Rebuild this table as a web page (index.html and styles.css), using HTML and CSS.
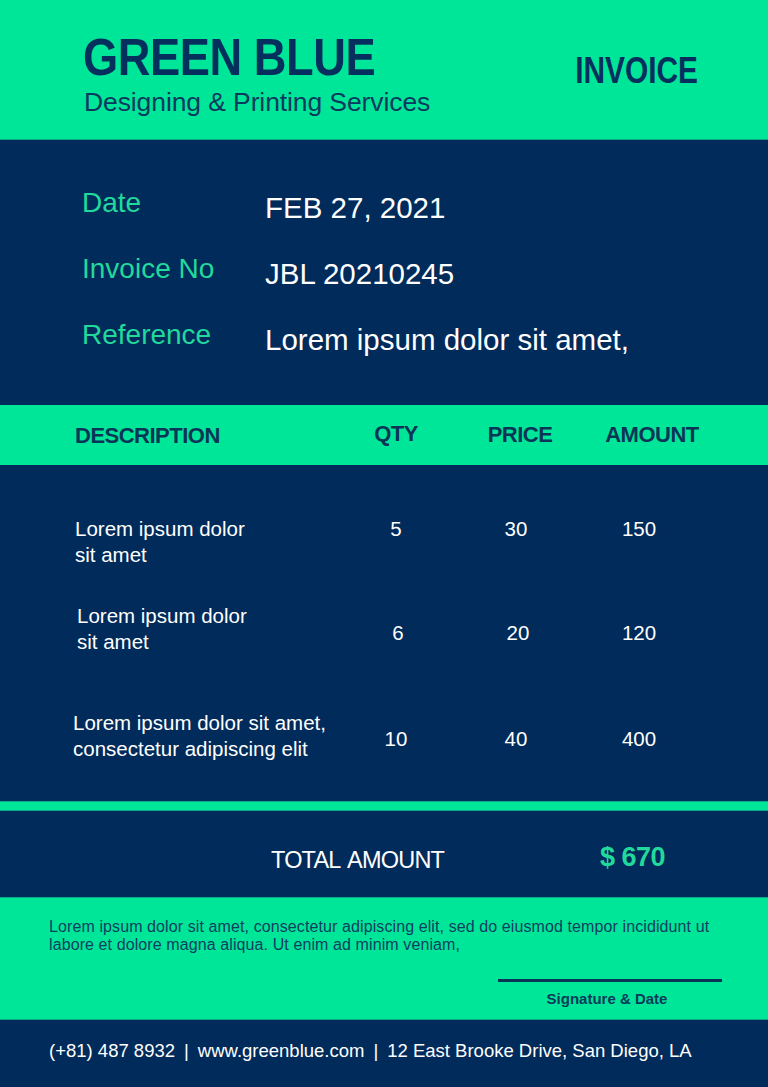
FILE: index.html
```html
<!DOCTYPE html>
<html lang="en">
<head>
<meta charset="utf-8">
<title>Invoice - Green Blue</title>
<link rel="stylesheet" href="styles.css">
</head>
<body>
<div class="page">
  <header class="top">
    <div class="brand">
      <h1 class="brand-name">GREEN BLUE</h1>
      <p class="brand-tag">Designing &amp; Printing Services</p>
    </div>
    <div class="doc-title">INVOICE</div>
  </header>

  <section class="info">
    <div class="info-row">
      <span class="info-label">Date</span>
      <span class="info-value">FEB 27, 2021</span>
    </div>
    <div class="info-row">
      <span class="info-label">Invoice No</span>
      <span class="info-value">JBL 20210245</span>
    </div>
    <div class="info-row">
      <span class="info-label">Reference</span>
      <span class="info-value">Lorem ipsum dolor sit amet,</span>
    </div>
  </section>

  <div class="thead">
    <span class="th th-desc">DESCRIPTION</span>
    <span class="th th-qty">QTY</span>
    <span class="th th-price">PRICE</span>
    <span class="th th-amt">AMOUNT</span>
  </div>

  <section class="tbody">
    <div class="trow trow-first">
      <span class="td-desc">Lorem ipsum dolor<br>sit amet</span>
      <span class="td">5</span>
      <span class="td">30</span>
      <span class="td td-amt">150</span>
    </div>
    <div class="trow trow-second">
      <span class="td-desc">Lorem ipsum dolor<br>sit amet</span>
      <span class="td">6</span>
      <span class="td">20</span>
      <span class="td td-amt">120</span>
    </div>
    <div class="trow trow-third">
      <span class="td-desc td-desc-wide">Lorem ipsum dolor sit amet,<br>consectetur adipiscing elit</span>
      <span class="td">10</span>
      <span class="td">40</span>
      <span class="td td-amt">400</span>
    </div>
  </section>

  <div class="strip"></div>

  <section class="total">
    <span class="total-label">TOTAL AMOUNT</span>
    <span class="total-value">$ 670</span>
  </section>

  <section class="note">
    <p class="note-text">Lorem ipsum dolor sit amet, consectetur adipiscing elit, sed do eiusmod tempor incididunt ut<br>labore et dolore magna aliqua. Ut enim ad minim veniam,</p>
    <div class="signature">
      <div class="sig-line"></div>
      <div class="sig-label">Signature &amp; Date</div>
    </div>
  </section>

  <footer class="footer">
    <span>(+81) 487 8932</span><span class="sep">|</span><span>www.greenblue.com</span><span class="sep">|</span><span>12 East Brooke Drive, San Diego, LA</span>
  </footer>
</div>
</body>
</html>
```

FILE: styles.css
```css
* { box-sizing: border-box; }

html, body {
  margin: 0;
  padding: 0;
}

body {
  width: 768px;
  height: 1087px;
  overflow: hidden;
  background: #012b5a;
  font-family: "Liberation Sans", Arial, sans-serif;
}

.page {
  display: flex;
  flex-direction: column;
  width: 768px;
  height: 1087px;
}

/* ---------- header ---------- */
.top {
  height: 140px;
  background: #00e699;
  display: flex;
  justify-content: space-between;
  align-items: flex-start;
  padding: 31px 70px 0 83px;
  border-bottom: 1px solid #0aa887;
}

.brand {
  display: flex;
  flex-direction: column;
  align-items: flex-start;
}

.brand-name {
  margin: 0;
  display: inline-block;
  font-weight: 700;
  font-size: 52px;
  line-height: 1;
  letter-spacing: -0.5px;
  color: #05305e;
  transform: scaleX(0.87);
  transform-origin: left center;
}

.brand-tag {
  margin: 6px 0 0 1px;
  font-size: 26.5px;
  line-height: 1;
  letter-spacing: -0.1px;
  color: #0a3a5e;
}

.doc-title {
  margin-top: 22px;
  font-weight: 700;
  font-size: 36px;
  line-height: 1;
  color: #05305e;
  transform: scaleX(0.83);
  transform-origin: right center;
}

/* ---------- info ---------- */
.info {
  height: 265px;
  padding: 49px 0 0 82px;
  display: flex;
  flex-direction: column;
}

.info-row {
  height: 66px;
  display: flex;
  align-items: flex-start;
}

.info-label {
  width: 183px;
  font-size: 28px;
  line-height: 1;
  color: #22d99c;
}

.info-value {
  margin-top: 4px;
  font-size: 29.5px;
  line-height: 1;
  color: #ffffff;
}

/* ---------- table ---------- */
.thead {
  height: 60px;
  background: #00e699;
  display: grid;
  grid-template-columns: 251px 100px 100px 120px;
  column-gap: 20px;
  align-items: center;
  padding-left: 75px;
}

.th {
  font-weight: 700;
  font-size: 22px;
  line-height: 1;
  letter-spacing: -0.5px;
  color: #0a3556;
  text-align: center;
}

.th-desc { text-align: left; margin-top: 2px; }
.th-qty { margin-top: -2px; }
.th-price { padding-left: 8px; }
.th-amt { padding-left: 12px; }

.tbody {
  height: 336px;
  padding: 51px 0 0 75px;
  display: flex;
  flex-direction: column;
}

.trow {
  display: grid;
  grid-template-columns: 251px 100px 100px 120px;
  column-gap: 20px;
  align-items: center;
  color: #ffffff;
  font-size: 20.5px;
  line-height: 26px;
}

.trow-first { align-items: start; }
.trow-second { margin-top: 35px; padding-left: 2px; }
.trow-third { margin-top: 55px; }

.td-desc {
  white-space: nowrap;
  text-align: left;
}

.td-desc-wide { margin-left: -2px; }

.trow-third .td { padding-top: 6px; }
.trow-second .td { padding-top: 8px; }

.td {
  text-align: center;
}

.td-amt { padding-right: 14px; }
.trow-second .td-amt { padding-right: 18px; }

.strip {
  height: 10px;
  background: #00e699;
  border-top: 1px solid #0aa887;
  border-bottom: 1px solid #0aa887;
}

/* ---------- total ---------- */
.total {
  height: 86px;
  display: flex;
  align-items: center;
  padding-left: 271px;
}

.total-label {
  width: 329px;
  font-size: 23.5px;
  line-height: 1;
  letter-spacing: -0.8px;
  word-spacing: 3px;
  color: #ffffff;
  padding-top: 14px;
}

.total-value {
  font-weight: 700;
  font-size: 27px;
  line-height: 1;
  letter-spacing: -0.5px;
  color: #22d99c;
  padding-top: 6px;
}

/* ---------- note ---------- */
.note {
  height: 122px;
  background: #00e699;
  border-top: 1px solid #0aa887;
  padding: 20px 0 0 49px;
  display: flex;
  flex-direction: column;
}

.note-text {
  margin: 0;
  font-size: 16px;
  line-height: 18px;
  letter-spacing: 0.1px;
  color: #0f3f60;
  white-space: nowrap;
}

.signature {
  margin: 25px 0 0 449px;
  width: 224px;
  display: flex;
  flex-direction: column;
  align-items: center;
}

.sig-line {
  width: 224px;
  height: 3px;
  background: #0a3556;
}

.sig-label {
  margin-top: 9px;
  margin-right: 6px;
  font-weight: 700;
  font-size: 15px;
  line-height: 1;
  color: #0a3a5a;
}

/* ---------- footer ---------- */
.footer {
  flex: 1;
  display: flex;
  align-items: center;
  padding: 0 0 6px 49px;
  border-top: 1px solid #0aa887;
  color: #ffffff;
  font-size: 18.5px;
  white-space: nowrap;
}

.sep {
  margin: 0 9px;
}
```
